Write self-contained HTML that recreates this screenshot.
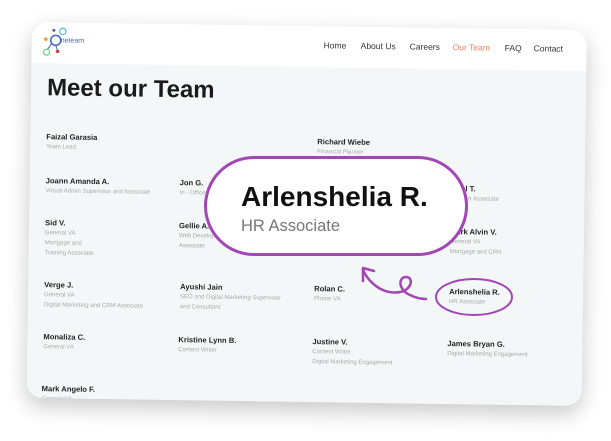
<!DOCTYPE html>
<html><head><meta charset="utf-8"><style>
html,body{margin:0;padding:0;width:611px;height:441px;background:#fff;overflow:hidden;font-family:"Liberation Sans",sans-serif}
#card{position:absolute;left:32px;top:22px;width:555px;height:376px;background:#f4f7f8;border-radius:16px;transform-origin:0 0;transform:rotate(0.83deg);box-shadow:0 8px 22px rgba(0,0,0,.22);overflow:hidden}
#hdr{position:absolute;left:0;top:0;width:100%;height:41px;background:#fff}
.nav{position:absolute;top:14px;font-size:8.5px;color:#333;white-space:nowrap}
.a{position:absolute;font-size:7.6px;font-weight:bold;color:#222;white-space:nowrap}
.s{position:absolute;font-size:6px;color:#aaa;line-height:10px;white-space:nowrap}
h1{position:absolute;left:16px;top:52px;margin:0;font-size:24px;color:#1b1b1b}
</style></head><body>
<div id="card">
<div id="hdr">
<svg style="position:absolute;left:10px;top:4px" width="60" height="32" viewBox="0 0 60 32">
<circle cx="14" cy="14" r="5" fill="none" stroke="#4463b8" stroke-width="1.5"/>
<circle cx="21" cy="5" r="3.2" fill="none" stroke="#5ab6ea" stroke-width="1.2"/>
<circle cx="5" cy="26" r="3" fill="none" stroke="#6cd07a" stroke-width="1.2"/>
<circle cx="16" cy="25" r="1.8" fill="#c54848"/>
<circle cx="4" cy="13" r="1.8" fill="#e9a040"/>
<circle cx="12" cy="4" r="1.5" fill="#4463b8"/>
<line x1="10" y1="17" x2="6" y2="23" stroke="#4463b8"/><line x1="14" y1="19" x2="16" y2="24" stroke="#4463b8"/>
<text x="19" y="16" font-size="7" fill="#4463b8" font-family="Liberation Sans">neteam</text>
</svg>
<span class="nav" style="left:292px">Home</span>
<span class="nav" style="left:329px">About Us</span>
<span class="nav" style="left:378px">Careers</span>
<span class="nav" style="left:421px;color:#e8825a">Our Team</span>
<span class="nav" style="left:473px">FAQ</span>
<span class="nav" style="left:502px">Contact</span>
</div>
<h1>Meet our Team</h1>
<div class="a" style="left:16px;top:110px">Faizal Garasia</div><div class="s" style="left:16px;top:120px">Team Lead</div>
<div class="a" style="left:287px;top:111px">Richard Wiebe</div><div class="s" style="left:287px;top:121px">Financial Planner</div>
<div class="a" style="left:16px;top:154px">Joann Amanda A.</div><div class="s" style="left:16px;top:164px">Virtual Admin Supervisor and Associate</div>
<div class="a" style="left:150px;top:154px">Jon G.</div><div class="s" style="left:150px;top:164px">In - Office</div>
<div class="a" style="left:421px;top:156px">Ariel T.</div><div class="s" style="left:421px;top:166px">Support Associate</div>
<div class="a" style="left:16px;top:196px">Sid V.</div><div class="s" style="left:16px;top:206px">General VA<br>Mortgage and<br>Training Associate</div>
<div class="a" style="left:150px;top:197px">Gellie A.</div><div class="s" style="left:150px;top:207px">Web Developer<br>Associate</div>
<div class="a" style="left:421px;top:199px">Mark Alvin V.</div><div class="s" style="left:421px;top:209px">General VA<br>Mortgage and CRN</div>
<div class="a" style="left:16px;top:258px">Verge J.</div><div class="s" style="left:16px;top:268px">General VA<br>Digital Marketing and CRM Associate</div>
<div class="a" style="left:152px;top:258px">Ayushi Jain</div><div class="s" style="left:152px;top:268px">SEO and Digital Marketing Supervisor<br>and Consultant</div>
<div class="a" style="left:286px;top:258px">Rolan C.</div><div class="s" style="left:286px;top:268px">Phone VA</div>
<div class="a" style="left:421px;top:259px">Arlenshelia R.</div><div class="s" style="left:421px;top:269px">HR Associate</div>
<div class="a" style="left:16px;top:310px">Monaliza C.</div><div class="s" style="left:16px;top:320px">General VA</div>
<div class="a" style="left:151px;top:311px">Kristine Lynn B.</div><div class="s" style="left:151px;top:321px">Content Writer</div>
<div class="a" style="left:285px;top:311px">Justine V.</div><div class="s" style="left:285px;top:321px">Content Writer<br>Digital Marketing Engagement</div>
<div class="a" style="left:420px;top:311px">James Bryan G.</div><div class="s" style="left:420px;top:321px">Digital Marketing Engagement</div>
<div class="a" style="left:15px;top:362px">Mark Angelo F.</div><div class="s" style="left:15px;top:372px">General VA</div>
</div>
<div style="position:absolute;left:204px;top:156px;width:258px;height:94px;border:3.5px solid #a345b5;border-radius:50px;background:#fff"></div>
<div style="position:absolute;left:241px;top:181px;font-size:28px;font-weight:bold;color:#111;white-space:nowrap">Arlenshelia R.</div>
<div style="position:absolute;left:241px;top:217px;font-size:16.5px;color:#777;white-space:nowrap">HR Associate</div>
<svg style="position:absolute;left:0;top:0" width="611" height="441">
<ellipse cx="474" cy="297" rx="38" ry="18" fill="none" stroke="#a345b5" stroke-width="2"/>
<path d="M363 270 C370 285 385 295 400 292 C412 290 414 277 406 277 C398 277 398 290 410 295 C416 298 421 299 426 299" fill="none" stroke="#a345b5" stroke-width="2.5" stroke-linecap="round"/>
<path d="M363 281 L363 268 L374 271" fill="none" stroke="#a345b5" stroke-width="2.5" stroke-linecap="round" stroke-linejoin="round"/>
</svg>
</body></html>
